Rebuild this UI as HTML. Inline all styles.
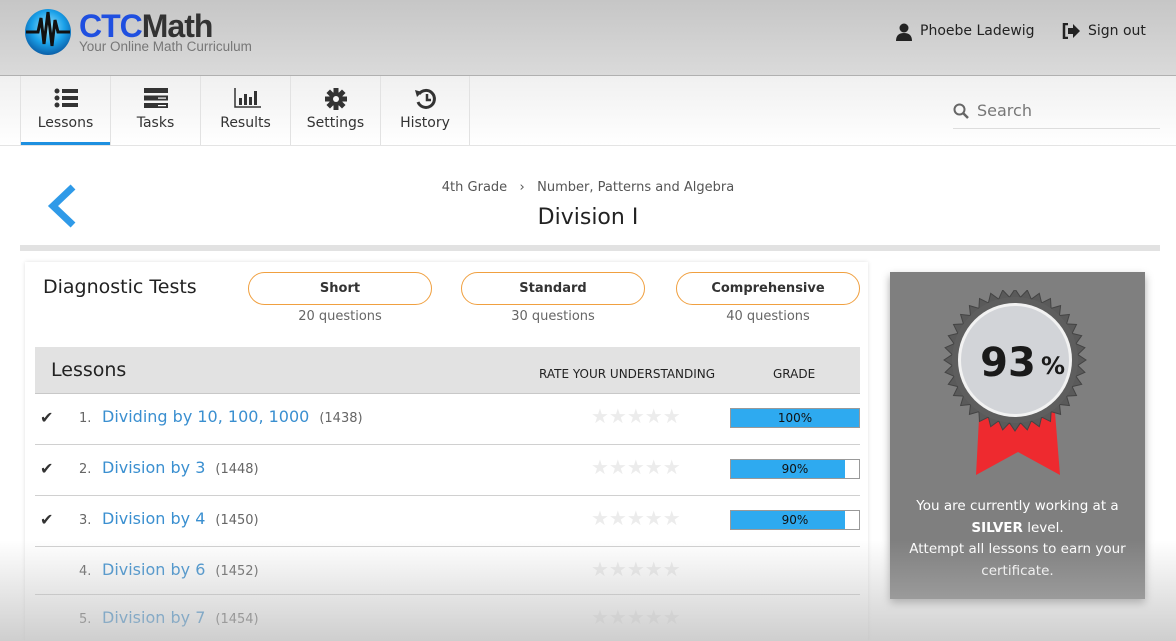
<!DOCTYPE html>
<html><head><meta charset="utf-8"><style>
*{box-sizing:border-box;margin:0;padding:0}
html,body{width:1176px;height:641px;overflow:hidden}
body{background:#fff;font-family:"DejaVu Sans","Liberation Sans",sans-serif;color:#333;position:relative}
.hdr{position:absolute;left:0;top:0;width:1176px;height:76px;background:linear-gradient(#c6c6c6,#dadada);border-bottom:1px solid #b0b0b0}
.nav{position:absolute;left:0;top:76px;width:1176px;height:70px;background:linear-gradient(#f0f0f0,#fff);border-bottom:1px solid #e4e4e4}
.tab{position:absolute;top:0;width:90px;height:69px;border-left:1px solid #e2e2e2;text-align:center;font-size:14px;color:#333}
.tab span{position:absolute;left:0;right:0;top:39px}
.tab svg{position:absolute;left:33px;top:12px}
.abs{position:absolute}
.btn{position:absolute;top:272px;width:184px;height:33px;border:1px solid #f0a040;border-radius:17px;text-align:center;line-height:31px;font-weight:bold;font-size:13px;color:#333}
.q{position:absolute;top:309px;width:184px;text-align:center;font-size:13px;color:#666}
.row{position:absolute;left:35px;width:825px;height:51px;border-bottom:1px solid #d0d0d0}
.row .ck{position:absolute;left:5px;top:14px;font-size:16px}
.row .n{position:absolute;left:44px;top:17px;font-size:13px;color:#666}
.row .t{position:absolute;left:67px;top:13px;font-size:16px;color:#3a8fd0}
.row .t small{font-size:13px;color:#666;margin-left:10px}
.stars{position:absolute;left:556px;top:10px;font-size:20px;color:#ececec;letter-spacing:0px}
.bar{position:absolute;left:695px;top:14px;width:130px;height:20px;border:1px solid #999;background:#fff;font-size:12px;text-align:center;line-height:18px;color:#111}
.bar i{position:absolute;left:0;top:0;bottom:0;background:#2eaaf0}
.bar b{position:relative;font-weight:normal}
</style></head><body>
<div class="hdr"></div>
<svg class="abs" style="left:24px;top:8px" width="48" height="48" viewBox="0 0 48 48"><defs><radialGradient id="g" cx="50%" cy="40%" r="60%"><stop offset="0" stop-color="#9fe6ff"/><stop offset=".6" stop-color="#1aa0e8"/><stop offset="1" stop-color="#0b5fa8"/></radialGradient></defs><circle cx="24" cy="24" r="23" fill="url(#g)"/><path d="M2 24 H14 L17 10 L20 36 L24 4 L28 38 L31 12 L34 24 H46" stroke="#111" stroke-width="3" fill="none"/></svg>
<div class="abs" style="left:79px;top:8px;font-family:'Liberation Sans',sans-serif;font-weight:bold;font-size:32px;letter-spacing:-1px"><span style="color:#1f4fe0">CTC</span><span style="color:#333">Math</span></div>
<div class="abs" style="left:79px;top:39px;font-family:'Liberation Sans',sans-serif;font-size:13.5px;color:#777">Your Online Math Curriculum</div>
<svg class="abs" style="left:896px;top:23px" width="16" height="18" viewBox="0 0 16 18"><circle cx="8" cy="5" r="4.5" fill="#222"/><path d="M0 18 Q0 10 8 10 Q16 10 16 18Z" fill="#222"/></svg>
<div class="abs" style="left:920px;top:23px;font-size:14px;color:#222">Phoebe Ladewig</div>
<svg class="abs" style="left:1062px;top:23px" width="18" height="16" viewBox="0 0 18 16"><path d="M6 1H2v14h4" stroke="#222" stroke-width="2.5" fill="none"/><path d="M6 5h5V1l7 7-7 7v-4H6z" fill="#222"/></svg>
<div class="abs" style="left:1088px;top:23px;font-size:14px;color:#222">Sign out</div>
<div class="nav">
<div class="tab" style="left:20px"><svg width="24" height="20"><circle cx="3" cy="3" r="2.5" fill="#333"/><circle cx="3" cy="10" r="2.5" fill="#333"/><circle cx="3" cy="17" r="2.5" fill="#333"/><rect x="8" y="1" width="16" height="4" fill="#333"/><rect x="8" y="8" width="16" height="4" fill="#333"/><rect x="8" y="15" width="16" height="4" fill="#333"/></svg><span>Lessons</span><div class="abs" style="left:0;right:0;bottom:0;height:3px;background:#1e90e0"></div></div>
<div class="tab" style="left:110px"><svg width="24" height="20"><rect x="0" y="0" width="24" height="5" fill="#333"/><rect x="0" y="7.5" width="24" height="5" fill="#333"/><rect x="0" y="15" width="24" height="5" fill="#333"/><rect x="14" y="9.5" width="8" height="1.2" fill="#fff"/><rect x="14" y="17" width="8" height="1.2" fill="#fff"/></svg><span>Tasks</span></div>
<div class="tab" style="left:200px"><svg width="28" height="20"><path d="M1 0V19H27" stroke="#333" stroke-width="1.5" fill="none"/><rect x="5" y="10" width="3" height="7" fill="#333"/><rect x="10" y="6" width="3" height="11" fill="#333"/><rect x="15" y="9" width="3" height="8" fill="#333"/><rect x="20" y="3" width="3" height="14" fill="#333"/></svg><span>Results</span></div>
<div class="tab" style="left:290px"><svg width="24" height="22" viewBox="0 0 24 22"><g transform="translate(12 11)"><circle r="7" fill="#333"/><g fill="#333"><rect x="-2.5" y="-11" width="5" height="22"/><rect x="-2.5" y="-11" width="5" height="22" transform="rotate(45)"/><rect x="-2.5" y="-11" width="5" height="22" transform="rotate(90)"/><rect x="-2.5" y="-11" width="5" height="22" transform="rotate(135)"/></g><circle r="3" fill="#f6f6f6"/></g></svg><span>Settings</span></div>
<div class="tab" style="left:380px;border-right:1px solid #e2e2e2"><svg width="24" height="22"><path d="M5 6A8.5 8.5 0 1 1 4 14" stroke="#333" stroke-width="3" fill="none"/><path d="M1 2L8 4L3 9Z" fill="#333"/><path d="M13 6V12H17" stroke="#333" stroke-width="2.5" fill="none"/></svg><span>History</span></div>
<svg class="abs" style="left:953px;top:27px" width="16" height="16"><circle cx="6.5" cy="6.5" r="5" stroke="#666" stroke-width="2" fill="none"/><path d="M10 10L15 15" stroke="#666" stroke-width="2.5"/></svg>
<div class="abs" style="left:977px;top:25px;font-size:16px;color:#777">Search</div>
<div class="abs" style="left:953px;top:52px;width:207px;height:1px;background:#ddd"></div>
</div>
<svg class="abs" style="left:45px;top:183px" width="34" height="46"><path d="M28 4L8 23L28 42" stroke="#2f9ae8" stroke-width="7" fill="none"/></svg>
<div class="abs" style="left:0;width:1176px;top:180px;text-align:center;font-size:13px;color:#555">4th Grade &nbsp;&nbsp;›&nbsp;&nbsp; Number, Patterns and Algebra</div>
<div class="abs" style="left:0;width:1176px;top:205px;text-align:center;font-size:22px;color:#222">Division I</div>
<div class="abs" style="left:20px;top:245px;width:1140px;height:6px;background:#e2e2e2"></div>
<div class="abs" style="left:25px;top:262px;width:843px;height:379px;box-shadow:0 0 4px rgba(0,0,0,.12)"></div>
<div class="abs" style="left:43px;top:276px;font-size:19px;color:#222">Diagnostic Tests</div>
<div class="btn" style="left:248px">Short</div><div class="q" style="left:248px">20 questions</div>
<div class="btn" style="left:461px">Standard</div><div class="q" style="left:461px">30 questions</div>
<div class="btn" style="left:676px">Comprehensive</div><div class="q" style="left:676px">40 questions</div>
<div class="abs" style="left:35px;top:347px;width:825px;height:47px;background:#e2e2e2;border-bottom:1px solid #c8c8c8"></div>
<div class="abs" style="left:51px;top:359px;font-size:19px;color:#222">Lessons</div>
<div class="abs" style="left:539px;top:367px;font-size:12px;color:#222">RATE YOUR UNDERSTANDING</div>
<div class="abs" style="left:773px;top:367px;font-size:12px;color:#222">GRADE</div>
<div class="row" style="top:394px"><span class="ck">✔</span><span class="n">1.</span><span class="t">Dividing by 10, 100, 1000<small>(1438)</small></span><span class="stars">★★★★★</span><div class="bar"><i style="width:100%"></i><b>100%</b></div></div>
<div class="row" style="top:445px"><span class="ck">✔</span><span class="n">2.</span><span class="t">Division by 3<small>(1448)</small></span><span class="stars">★★★★★</span><div class="bar"><i style="width:89%"></i><b>90%</b></div></div>
<div class="row" style="top:496px"><span class="ck">✔</span><span class="n">3.</span><span class="t">Division by 4<small>(1450)</small></span><span class="stars">★★★★★</span><div class="bar"><i style="width:89%"></i><b>90%</b></div></div>
<div class="row" style="top:547px;height:48px"><span class="n">4.</span><span class="t">Division by 6<small>(1452)</small></span><span class="stars">★★★★★</span></div>
<div class="row" style="top:595px;height:46px;border:0"><span class="n">5.</span><span class="t">Division by 7<small>(1454)</small></span><span class="stars">★★★★★</span></div>
<div class="abs" style="left:890px;top:272px;width:255px;height:327px;background:#7f7f7f;box-shadow:0 4px 8px rgba(0,0,0,.35)"></div>
<svg class="abs" style="left:940px;top:290px" width="150" height="190" viewBox="0 0 150 190">
<path d="M40 110L36 185L78 162L120 185L114 110Z" fill="#ee2a2f"/>
<polygon fill="#5a5a5a" stroke="#444" points="" id="st"/>
<circle cx="75" cy="70" r="63" fill="#5e5e5e"/>
<circle cx="75" cy="70" r="57" fill="#f2f2f2"/>
<circle cx="75" cy="70" r="54" fill="#d2d4d8"/>
<text x="68" y="86" text-anchor="middle" font-family="DejaVu Sans,sans-serif" font-weight="bold" font-size="40" fill="#1a1a1a">93</text>
<text x="113" y="84" text-anchor="middle" font-family="DejaVu Sans,sans-serif" font-weight="bold" font-size="24" fill="#1a1a1a">%</text>
</svg>
<div class="abs" style="left:890px;top:496px;width:255px;text-align:center;font-size:13.5px;line-height:21.5px;color:#fff">You are currently working at a<br><b>SILVER</b> level.<br>Attempt all lessons to earn your<br>certificate.</div>
<div class="abs" style="left:0;top:540px;width:1176px;height:101px;background:linear-gradient(rgba(200,200,200,0),rgba(190,190,190,.75))"></div>
<script>
var p=[],n=36;for(var i=0;i<n*2;i++){var a=i*Math.PI/n,r=i%2?63:71;p.push((75+r*Math.sin(a)).toFixed(1)+','+(70-r*Math.cos(a)).toFixed(1));}
document.getElementById('st').setAttribute('points',p.join(' '));
</script>
</body></html>
